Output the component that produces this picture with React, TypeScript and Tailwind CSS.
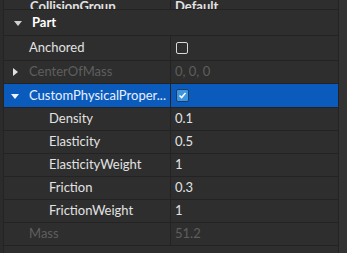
const rows = [
  { name: 'Density', value: '0.1' },
  { name: 'Elasticity', value: '0.5' },
  { name: 'ElasticityWeight', value: '1' },
  { name: 'Friction', value: '0.3' },
  { name: 'FrictionWeight', value: '1' },
]

function Caret({ open, className }: { open: boolean; className?: string }) {
  return (
    <svg width="8" height="8" viewBox="0 0 8 8" className={className}>
      {open ? <path d="M0 2 L8 2 L4 7 Z" fill="currentColor" /> : <path d="M2 0 L7 4 L2 8 Z" fill="currentColor" />}
    </svg>
  )
}

function Row({
  h = 'h-[23px]',
  name,
  value,
  selected,
}: {
  h?: string
  name: React.ReactNode
  value: React.ReactNode
  selected?: boolean
}) {
  return (
    <div className={`flex ${h} border-b border-[#232323] ${selected ? 'bg-[#0b5bbd]' : ''}`}>
      <div className="flex w-[167px] items-center border-r border-[#232323]">{name}</div>
      <div className="flex flex-1 items-center pl-[4px]">{value}</div>
    </div>
  )
}

export default function App() {
  return (
    <div
      className="flex h-[253px] w-[347px] overflow-hidden bg-[#2e2e2e] text-[13px] text-[#e2e2e2]"
      style={{ fontFamily: 'Lato, "Noto Sans", sans-serif' }}
    >
      <div className="w-[4px] shrink-0 border-r border-[#242424] bg-[#2b2b2b]" />
      <div className="flex w-[334px] flex-col">
        <div className="flex h-[10px] items-end border-b border-[#232323] overflow-hidden">
          <div className="flex w-[167px] border-r border-[#232323] h-full items-end">
            <span className="pl-[26px] font-bold leading-[14px] translate-y-[4px]">CollisionGroup</span>
          </div>
          <span className="pl-[4px] font-bold leading-[14px] translate-y-[4px]">Default</span>
        </div>
        <div className="flex h-[26px] items-center border-b border-[#232323]">
          <Caret open className="ml-[10px] text-[#d0d0d0]" />
          <span className="ml-[10px] font-bold text-white">Part</span>
        </div>
        <Row
          h="h-[25px]"
          name={<span className="pl-[25px]">Anchored</span>}
          value={<span className="ml-[1px] block h-[12px] w-[12px] rounded-[2px] border border-[#d8d8d8]" />}
        />
        <Row
          name={
            <>
              <Caret open={false} className="ml-[7px] text-[#e0e0e0]" />
              <span className="ml-[10px] text-[#5e5e5e]">CenterOfMass</span>
            </>
          }
          value={<span className="text-[#5e5e5e]">0, 0, 0</span>}
        />
        <Row
          h="h-[24px]"
          selected
          name={
            <>
              <Caret open className="ml-[7px] text-[#eef4ff]" />
              <span className="ml-[10px] truncate text-[#e8f0ff]">CustomPhysicalProper...</span>
            </>
          }
          value={
            <span className="ml-[1px] flex h-[13px] w-[13px] items-center justify-center rounded-[2px] border border-[#1d3c66] bg-[#3d95e0]">
              <svg width="9" height="9" viewBox="0 0 9 9">
                <path d="M1.5 4.5 L3.6 6.6 L7.5 2" stroke="#ffffff" strokeWidth="1.5" fill="none" />
              </svg>
            </span>
          }
        />
        {rows.map((r) => (
          <Row key={r.name} name={<span className="pl-[45px]">{r.name}</span>} value={<span>{r.value}</span>} />
        ))}
        <Row name={<span className="pl-[25px] text-[#5e5e5e]">Mass</span>} value={<span className="text-[#5e5e5e]">51.2</span>} />
      </div>
      <div className="w-[9px] shrink-0 border-l border-[#232323] bg-[#333333]" />
    </div>
  )
}
